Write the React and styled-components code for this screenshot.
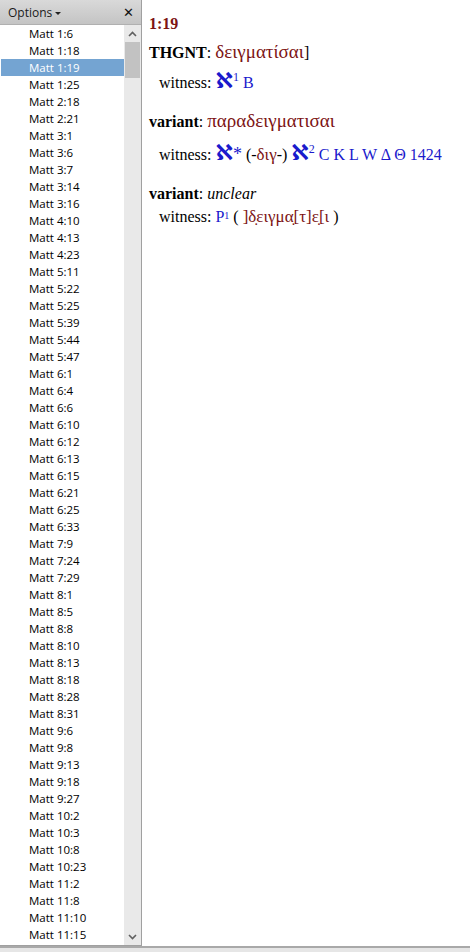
import React from 'react';
import styled, { createGlobalStyle } from 'styled-components';

const GlobalStyle = createGlobalStyle`
  html, body { margin: 0; padding: 0; background: #fff; }
  body { width: 470px; height: 952px; overflow: hidden; }
`;

const verses = [
  '1:6', '1:18', '1:19', '1:25', '2:18', '2:21', '3:1', '3:6', '3:7', '3:14',
  '3:16', '4:10', '4:13', '4:23', '5:11', '5:22', '5:25', '5:39', '5:44', '5:47',
  '6:1', '6:4', '6:6', '6:10', '6:12', '6:13', '6:15', '6:21', '6:25', '6:33',
  '7:9', '7:24', '7:29', '8:1', '8:5', '8:8', '8:10', '8:13', '8:18', '8:28',
  '8:31', '9:6', '9:8', '9:13', '9:18', '9:27', '10:2', '10:3', '10:8', '10:23',
  '11:2', '11:8', '11:10', '11:15',
];

const Window = styled.div`
  display: flex;
  flex-direction: column;
  width: 470px;
  height: 952px;
`;

const Body = styled.div`
  display: flex;
  height: 946px;
`;

const StatusStrip = styled.div`
  height: 4px;
  border-top: 2px solid #a9a9a9;
  background: #e6e6e6;
`;

const Sidebar = styled.div`
  width: 141px;
  border-right: 1px solid #a0a0a0;
  border-bottom: 1px solid #a0a0a0;
  display: flex;
  flex-direction: column;
  font-family: "Open Sans", "Noto Sans", sans-serif;
  font-size: 11.5px;
`;

const Header = styled.div`
  height: 24px;
  display: flex;
  align-items: center;
  justify-content: space-between;
  padding: 0 7px 0 8px;
  background: linear-gradient(#d9d9d9, #c4c4c4);
  border-bottom: 1px solid #b0b0b0;
  color: #1a1a1a;
  font-size: 12px;
`;

const Caret = styled.span`
  display: inline-block;
  margin-left: 3px;
  vertical-align: middle;
  border-left: 3px solid transparent;
  border-right: 3px solid transparent;
  border-top: 3px solid #222;
`;

const Close = styled.span`
  font-family: "DejaVu Sans", sans-serif;
  font-weight: bold;
  font-size: 13px;
  color: #111;
`;

const ListArea = styled.div`
  flex: 1;
  display: flex;
  min-height: 0;
`;

const List = styled.div`
  flex: 1;
  overflow: hidden;
`;

const Row = styled.div`
  height: 17px;
  line-height: 17px;
  padding-left: 28px;
  margin-left: 1px;
  background: ${(p) => (p.$selected ? '#74a4d2' : 'transparent')};
  color: ${(p) => (p.$selected ? '#ffffff' : '#000000')};
  white-space: nowrap;
`;

const Scrollbar = styled.div`
  width: 17px;
  background: #e9e9e9;
  display: flex;
  flex-direction: column;
  align-items: center;
`;

const ArrowBox = styled.div`
  height: 17px;
  width: 17px;
  display: flex;
  align-items: center;
  justify-content: center;
`;

const Track = styled.div`
  flex: 1;
  width: 100%;
`;

const Thumb = styled.div`
  margin: 0 1px;
  height: 36px;
  background: #c2c2c2;
`;

const Main = styled.div`
  flex: 1;
  padding: 14px 0 0 7px;
  font-family: "Liberation Serif", "DejaVu Serif", serif;
  color: #000;
`;

const Ref = styled.div`
  color: #7d1414;
  font-weight: bold;
  font-size: 16px;
  line-height: 20px;
  margin-bottom: 5px;
`;

const Reading = styled.div`
  font-size: 16px;
  line-height: 26px;
  margin-top: ${(p) => p.$top || 0}px;
`;

const Label = styled.b`
  font-weight: bold;
`;

const Greek = styled.span`
  color: #7d1414;
  font-size: ${(p) => p.$size || 19}px;
`;

const Italic = styled.i`
  font-size: 16px;
`;

const Witness = styled.div`
  padding-left: 10px;
  font-size: 16px;
  line-height: ${(p) => p.$lh || 30}px;
  margin-top: ${(p) => p.$top || 0}px;
`;

const Ms = styled.span`
  color: #1a1acc;
  font-size: ${(p) => p.$size || 16}px;
`;

const Aleph = styled.span`
  color: #1a1acc;
  font-weight: bold;
  font-size: 22px;
  font-family: "DejaVu Sans", sans-serif;
`;

const Sup = styled.sup`
  font-size: ${(p) => p.$size || 12}px;
  vertical-align: ${(p) => p.$raise || 7}px;
  line-height: 0;
`;

const Chevron = ({ up }) => (
  <svg width="9" height="6" viewBox="0 0 9 6">
    <path
      d={up ? 'M1 5 L4.5 1.5 L8 5' : 'M1 1 L4.5 4.5 L8 1'}
      fill="none"
      stroke="#606060"
      strokeWidth="1.6"
    />
  </svg>
);

const App = () => (
  <Window>
    <GlobalStyle />
    <Body>
      <Sidebar>
        <Header>
          <span>Options<Caret /></span>
          <Close>✕</Close>
        </Header>
        <ListArea>
          <List>
            {verses.map((v) => (
              <Row key={v} $selected={v === '1:19'}>Matt {v}</Row>
            ))}
          </List>
          <Scrollbar>
            <ArrowBox><Chevron up /></ArrowBox>
            <Track><Thumb /></Track>
            <ArrowBox><Chevron /></ArrowBox>
          </Scrollbar>
        </ListArea>
      </Sidebar>

      <Main>
        <Ref>1:19</Ref>

        <Reading>
          <Label>THGNT</Label>: <Greek>δειγματίσαι</Greek>]
        </Reading>
        <Witness>
          witness: <Aleph>ℵ</Aleph><Ms><Sup>1</Sup> B</Ms>
        </Witness>

        <Reading $top={10}>
          <Label>variant</Label>: <Greek>παραδειγματισαι</Greek>
        </Reading>
        <Witness $top={3}>
          witness: <Aleph>ℵ</Aleph><Ms $size={18}>*</Ms> (-<Greek $size={17}>διγ</Greek>-){' '}
          <Aleph>ℵ</Aleph><Ms><Sup>2</Sup> C K L W Δ Θ 1424</Ms>
        </Witness>

        <Reading $top={11}>
          <Label>variant</Label>: <Italic>unclear</Italic>
        </Reading>
        <Witness $lh={20}>
          witness: <Ms>P<Sup $size={10} $raise={3}>1</Sup></Ms> ( <Greek $size={17}>]δ̣ειγμα̣[τ]ε̣[ι</Greek> )
        </Witness>
      </Main>
    </Body>
    <StatusStrip />
  </Window>
);

export default App;
